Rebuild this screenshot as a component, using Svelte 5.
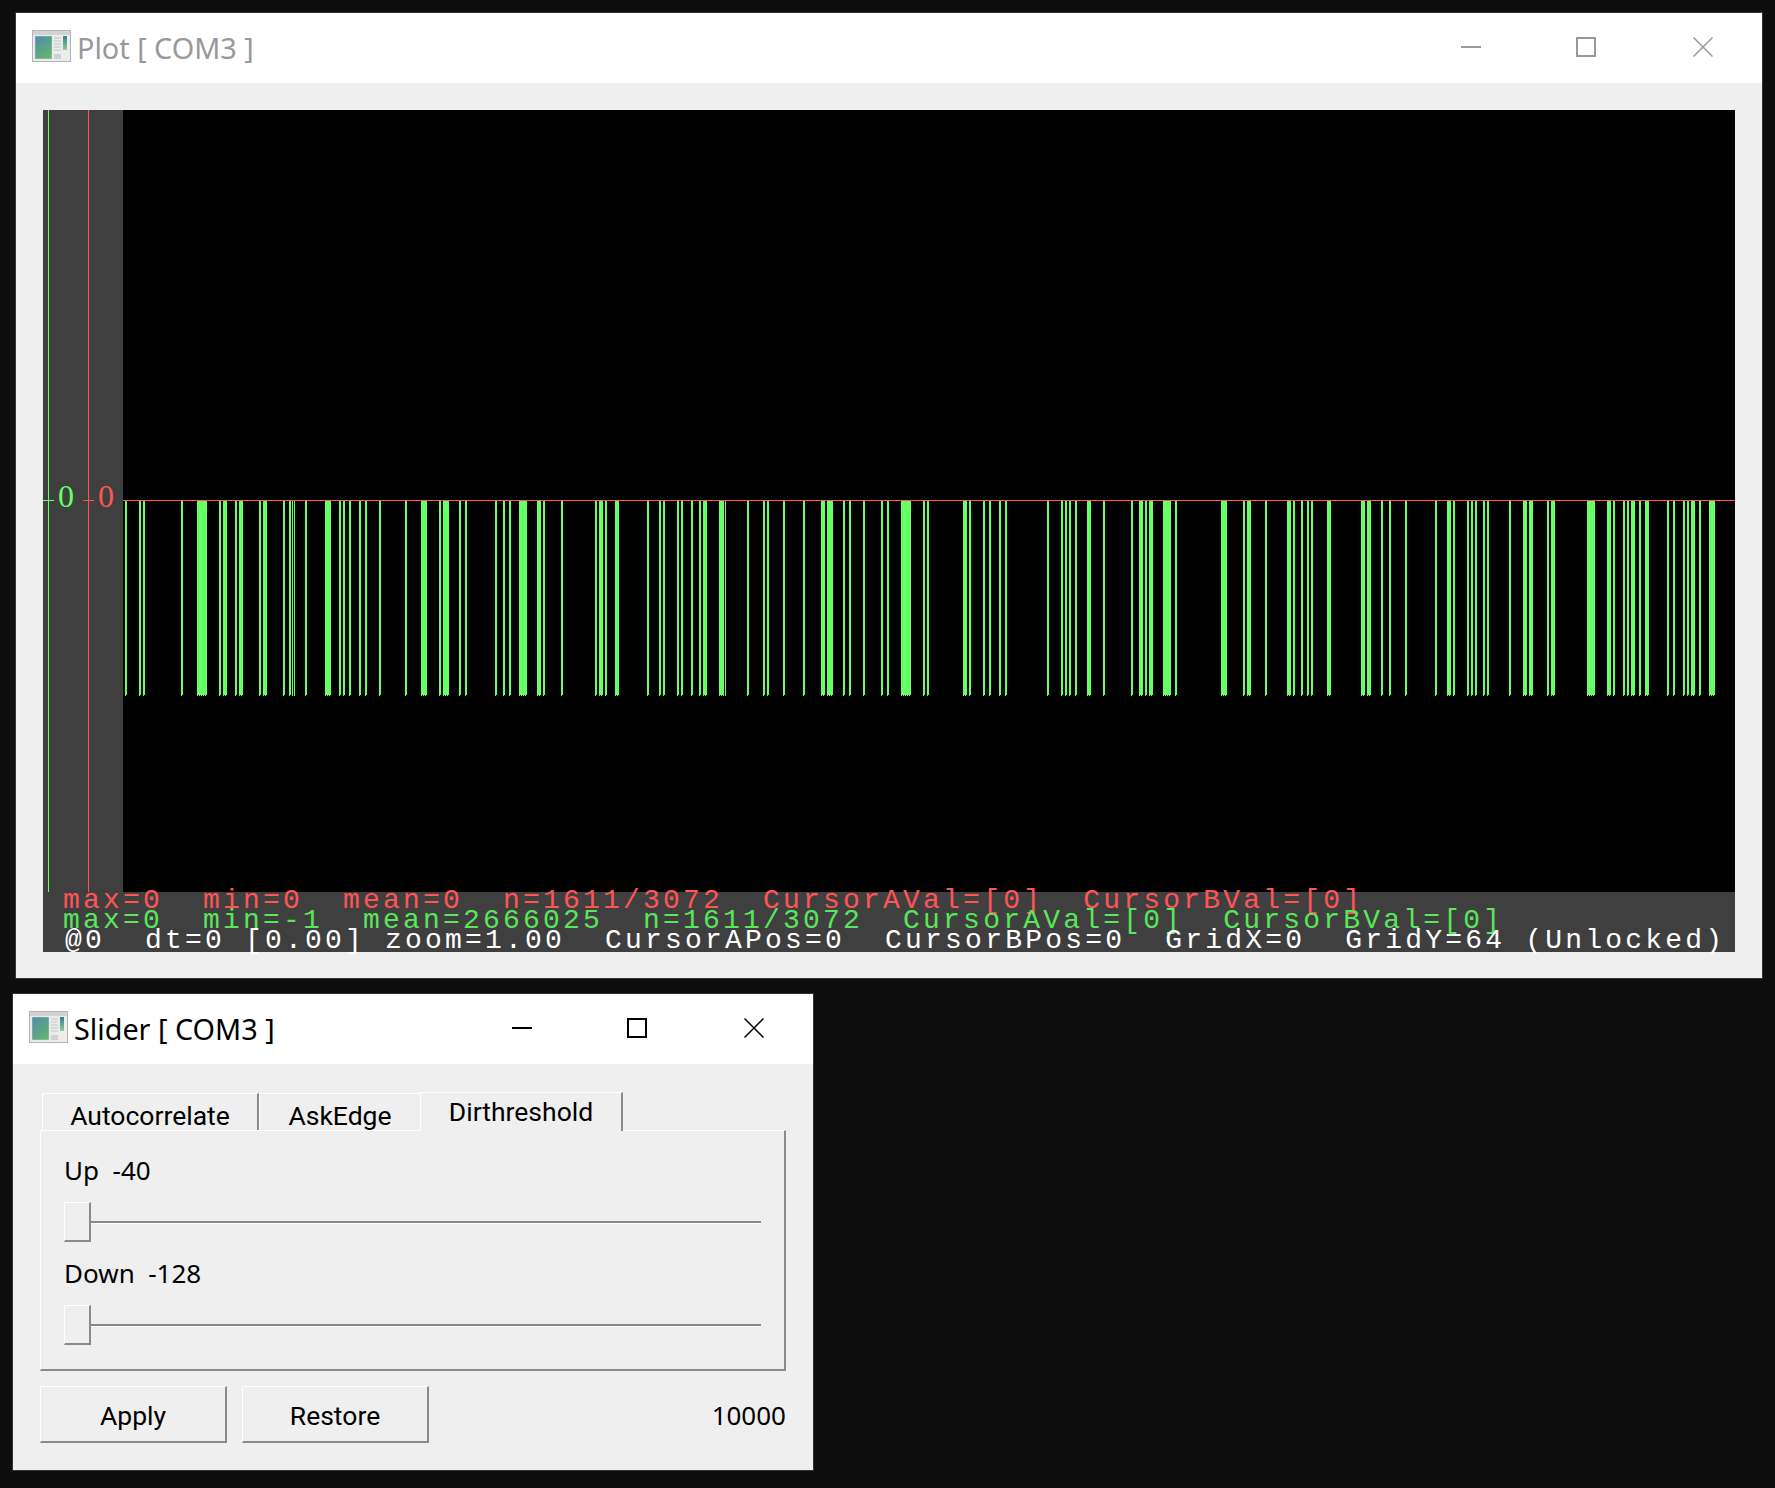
<script lang="ts">
  // [start, end) x positions of the sample bars, page coords
  const bars: [number, number][] = [
    [125,127],[139,141],[143,145],[181,183],[197,207],[219,221],[223,227],[235,237],[239,243],[259,261],
    [263,267],[283,285],[289,291],[292,293],[294,295],[305,307],[325,331],[339,341],[343,345],[349,351],
    [359,361],[365,367],[379,381],[405,407],[421,427],[439,441],[443,449],[459,461],[465,467],[495,497],
    [503,505],[509,511],[519,527],[537,541],[543,545],[561,563],[595,597],[599,603],[605,607],[615,619],
    [647,649],[659,661],[663,665],[677,679],[681,683],[691,693],[699,701],[703,707],[719,724],[725,726],
    [747,749],[763,765],[767,769],[783,785],[803,805],[821,825],[827,833],[843,845],[849,851],[863,865],
    [881,883],[887,889],[901,911],[923,925],[927,929],[963,967],[969,971],[983,985],[989,991],[999,1001],
    [1005,1007],[1047,1049],[1061,1063],[1065,1067],[1069,1071],[1075,1077],[1087,1091],[1103,1105],
    [1131,1133],[1139,1143],[1145,1147],[1149,1153],[1163,1171],[1175,1177],[1221,1227],[1243,1245],
    [1247,1251],[1265,1267],[1287,1291],[1293,1295],[1301,1303],[1307,1309],[1311,1313],[1327,1331],
    [1361,1365],[1367,1371],[1381,1383],[1389,1391],[1405,1407],[1435,1437],[1447,1451],[1453,1455],
    [1467,1469],[1471,1473],[1475,1477],[1483,1485],[1487,1489],[1509,1511],[1523,1527],[1529,1533],
    [1547,1549],[1551,1555],[1587,1595],[1607,1611],[1613,1615],[1623,1625],[1627,1629],[1631,1635],
    [1639,1641],[1645,1649],[1667,1669],[1673,1675],[1683,1685],[1687,1689],[1691,1695],[1699,1701],
    [1709,1715]
  ];

  const sliders = [
    { label: 'Up  -40' },
    { label: 'Down  -128' }
  ];
</script>

{#snippet appIcon()}
  <svg class="app-icon" viewBox="0 0 39 32" aria-hidden="true">
    <defs>
      <linearGradient id="pane" x1="0" y1="0" x2="0.6" y2="1">
        <stop offset="0" stop-color="#5288ab" />
        <stop offset="1" stop-color="#62b274" />
      </linearGradient>
      <linearGradient id="side" x1="0" y1="0" x2="0" y2="1">
        <stop offset="0" stop-color="#2f7f94" />
        <stop offset="1" stop-color="#8fcb98" />
      </linearGradient>
    </defs>
    <rect x="0.5" y="0.5" width="38" height="31" fill="#ececec" stroke="#b4b4b4" />
    <rect x="1" y="1" width="37" height="4" fill="#d2d2d2" />
    <rect x="3" y="6" width="17" height="23" fill="url(#pane)" stroke="#cfe0d8" stroke-width="0.5" />
    <g stroke="#c4c4c4">
      <line x1="22" y1="8" x2="29" y2="8" />
      <line x1="22" y1="11" x2="29" y2="11" />
      <line x1="22" y1="14" x2="29" y2="14" />
      <line x1="22" y1="17" x2="29" y2="17" />
      <line x1="22" y1="20" x2="29" y2="20" />
    </g>
    <rect x="31" y="6" width="4" height="14" fill="url(#side)" />
    <rect x="22" y="24" width="7" height="5" fill="#d0d0d0" />
  </svg>
{/snippet}

{#snippet titlebar(title, inactive)}
  <header class="titlebar" class:inactive>
    {@render appIcon()}
    <span class="title">{title}</span>
    <div class="controls">
      <svg viewBox="0 0 20 20" aria-hidden="true"><line x1="0" y1="10" x2="20" y2="10" stroke-width="2" /></svg>
      <svg viewBox="0 0 20 20" aria-hidden="true"><rect x="1" y="1" width="18" height="18" fill="none" stroke-width="2" /></svg>
      <svg viewBox="0 0 20 20" aria-hidden="true"><path d="M0.5 0.5 L19.5 19.5 M19.5 0.5 L0.5 19.5" fill="none" stroke-width="1.5" /></svg>
    </div>
  </header>
{/snippet}

<main class="desktop">
  <section class="window plot-window">
    {@render titlebar('Plot [ COM3 ]', true)}
    <div class="plot-body">
      <svg class="chart" viewBox="43 110 1692 782" shape-rendering="crispEdges">
        <rect x="43" y="110" width="1692" height="782" fill="#000" />
        <rect x="43" y="110" width="80" height="782" fill="#3f3f3f" />
        <rect x="48" y="110" width="1" height="782" fill="#66ff66" />
        <rect x="88" y="110" width="1" height="782" fill="#ff5555" />
        <rect x="43" y="500" width="11" height="1" fill="#66ff66" />
        <rect x="83" y="500" width="11" height="1" fill="#ff5555" />
        <text x="58" y="507" class="axis" fill="#66ff66">0</text>
        <text x="98" y="507" class="axis" fill="#ff5555">0</text>
        {#each bars as [a, b]}
          <rect x={a} y="501" width={b - a} height="194" fill="#66ff66" />
          <line x1={a} x2={b} y1="695.5" y2="695.5" stroke="#66ff66" stroke-dasharray="1 1" />
        {/each}
        <rect x="123" y="500" width="1612" height="1" fill="#ff5555" />
      </svg>
      <div class="status">
        <div class="red">max=0  min=0  mean=0  n=1611/3072  CursorAVal=[0]  CursorBVal=[0]</div>
        <div class="green">max=0  min=-1  mean=2666025  n=1611/3072  CursorAVal=[0]  CursorBVal=[0]</div>
        <div class="white">@0  dt=0 [0.00] zoom=1.00  CursorAPos=0  CursorBPos=0  GridX=0  GridY=64 (Unlocked)</div>
      </div>
    </div>
  </section>

  <section class="window slider-window">
    {@render titlebar('Slider [ COM3 ]', false)}
    <div class="slider-body">
      <div class="tabs">
        <div class="tab tab-auto">Autocorrelate</div>
        <div class="tab tab-ask">AskEdge</div>
        <div class="tab tab-dir selected">Dirthreshold</div>
      </div>
      <div class="panel">
        {#each sliders as s}
          <div class="slider">
            <div class="slider-label">{s.label}</div>
            <div class="track">
              <div class="handle"></div>
              <div class="groove"></div>
            </div>
          </div>
        {/each}
      </div>
      <div class="actions">
        <button>Apply</button>
        <button>Restore</button>
        <span class="count">10000</span>
      </div>
    </div>
  </section>
</main>

<style>
  :global(body) {
    margin: 0;
    background: #0d0d0d;
  }

  .desktop {
    width: 1775px;
    height: 1488px;
    box-sizing: border-box;
    padding: 13px 0 0 13px;
    display: flex;
    flex-direction: column;
    gap: 16px;
    font-family: "Noto Sans", "Open Sans", sans-serif;
    color: #000;
  }

  .window {
    display: flex;
    flex-direction: column;
    background: #efefef;
    box-shadow: 0 0 0 1px #333;
  }

  .plot-window {
    width: 1746px;
    height: 965px;
    margin-left: 3px;
  }

  .slider-window {
    width: 800px;
    height: 476px;
  }

  .titlebar {
    height: 70px;
    flex: none;
    display: flex;
    align-items: center;
    background: #fff;
    padding: 0 0 0 16px;
    color: #000;
  }

  .titlebar.inactive {
    color: #999;
  }

  .app-icon {
    width: 39px;
    height: 32px;
    flex: none;
    margin-top: -4px;
  }

  .title {
    margin-left: 6px;
    font-size: 28.8px;
    margin-top: -1px;
  }

  .controls {
    margin-left: auto;
    display: flex;
    gap: 97px;
    padding-right: 49px;
    margin-top: -2px;
  }

  .controls svg {
    width: 20px;
    height: 20px;
    stroke: #999;
    display: block;
  }

  .controls svg:first-child {
    margin-right: -2px;
  }

  .slider-window .controls svg {
    stroke: #000;
  }

  .plot-body {
    padding: 27px 27px 26px;
  }

  .chart {
    display: block;
    width: 1692px;
    height: 782px;
  }

  .axis {
    font-family: "Liberation Serif", serif;
    font-size: 32px;
  }

  .status {
    height: 60px;
    background: #3f3f3f;
    font-family: "Liberation Mono", monospace;
    font-size: 28px;
    letter-spacing: 3.2px;
    line-height: 20px;
    padding-left: 20px;
  }

  .status > div {
    white-space: pre;
    position: relative;
    top: -1px;
  }

  .red { color: #ff5555; }
  .green { color: #5ae65a; }
  .white { color: #fff; padding-left: 2px; }

  .slider-body {
    padding: 28px 27px 28px 27px;
    display: flex;
    flex-direction: column;
    font-size: 26px;
  }

  .tabs {
    height: 38px;
    display: flex;
    padding-left: 2px;
    font-family: Roboto, "Noto Sans", sans-serif;
    font-size: 26.5px;
  }

  .tab {
    box-sizing: border-box;
    border-top: 1px solid #fff;
    border-left: 1px solid #fff;
    border-right: 2px solid #8a8a8a;
    margin-top: 1px;
    height: 37px;
    text-align: center;
    padding-top: 5px;
    line-height: 34px;
    white-space: nowrap;
  }

  .tab-auto { width: 217px; }
  .tab-ask { width: 161px; border-right: none; }

  .tab-dir {
    width: 203px;
  }

  .tab.selected {
    margin-top: 0;
    height: 39px;
    padding-top: 2px;
    margin-bottom: -1px;
    background: #efefef;
    position: relative;
    z-index: 1;
  }

  .panel {
    height: 241px;
    box-sizing: border-box;
    border-top: 1px solid #fff;
    border-left: 1px solid #fff;
    border-right: 2px solid #8a8a8a;
    border-bottom: 2px solid #8a8a8a;
    padding: 20px 23px 0 23px;
    display: flex;
    flex-direction: column;
    gap: 12px;
  }

  .slider-label {
    height: 36px;
    line-height: 38px;
    margin-bottom: 15px;
    white-space: pre;
  }

  .track {
    height: 40px;
    display: flex;
    align-items: center;
  }

  .handle {
    box-sizing: border-box;
    width: 27px;
    height: 40px;
    flex: none;
    border-top: 1px solid #fff;
    border-left: 1px solid #fff;
    border-right: 2px solid #8a8a8a;
    border-bottom: 2px solid #8a8a8a;
  }

  .groove {
    flex: 1;
    height: 3px;
    box-sizing: border-box;
    border-top: 2px solid #8a8a8a;
    border-bottom: 1px solid #fff;
    margin-top: 1px;
  }

  .actions {
    margin-top: 15px;
    height: 57px;
    display: flex;
    align-items: center;
    gap: 15px;
  }

  button {
    width: 187px;
    height: 57px;
    box-sizing: border-box;
    background: #efefef;
    border-top: 1px solid #fff;
    border-left: 1px solid #fff;
    border-right: 2px solid #8a8a8a;
    border-bottom: 2px solid #8a8a8a;
    font-family: Roboto, "Noto Sans", sans-serif;
    font-size: 26.5px;
    color: #000;
    padding: 2px 0 0;
  }

  .count {
    margin-left: auto;
  }
</style>
